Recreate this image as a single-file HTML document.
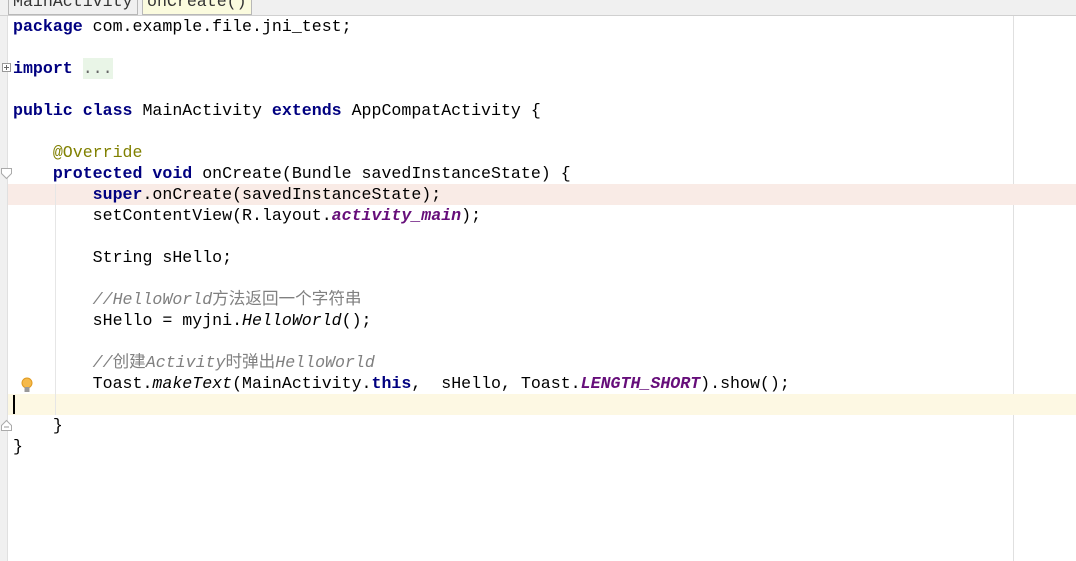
<!DOCTYPE html>
<html><head><meta charset="utf-8"><style>
body{margin:0;width:1076px;height:561px;overflow:hidden;background:#fff;position:relative;font-family:"Liberation Mono","Noto Sans CJK SC",monospace;}
.tabbar{position:absolute;left:0;top:0;width:1076px;height:15px;background:#f0f0f0;border-bottom:1px solid #d0d0d0;}
.tab{position:absolute;top:-6px;height:20px;border:1px solid #b8b8b8;border-top:none;font-size:16.6px;line-height:15px;padding:0 4px;color:#333;}
.gutter{position:absolute;left:0;top:16px;width:7px;height:545px;background:#f0f0f0;border-right:1px solid #e0e0e0;}
.margin{position:absolute;left:1013px;top:16px;width:1px;height:545px;background:#e0e0e0;}
.guide{position:absolute;width:1px;background:#e6e6e6;}
.row{position:absolute;left:8px;width:1068px;height:21px;}
.ln{position:absolute;left:13px;height:21px;line-height:21px;font-size:16.6px;white-space:pre;color:#000;}
.k{color:#000080;font-weight:bold;}
.a{color:#808000;}
.c{color:#808080;font-style:italic;}
.cj{color:#808080;font-style:normal;}
.f{color:#660e7a;font-weight:bold;font-style:italic;}
.i{font-style:italic;}
</style></head><body>
<div class="tabbar">
<div class="tab" style="left:8px;background:#f0f0f0;">MainActivity</div>
<div class="tab" style="left:142px;background:#fbfbde;">onCreate()</div>
</div>
<div class="gutter"></div>
<div class="margin"></div>
<div class="row" style="top:184px;background:#f9ebe6;"></div>
<div class="row" style="top:394px;background:#fdf8e3;"></div>
<div class="guide" style="left:55px;top:184px;height:231px;"></div>
<div style="position:absolute;left:83px;top:58px;width:30px;height:21px;background:#e9f5e7;"></div>
<div style="position:absolute;left:13px;top:395px;width:2px;height:19px;background:#000;"></div>
<svg style="position:absolute;left:2px;top:63px" width="10" height="10"><rect x="0.5" y="0.5" width="8" height="8" fill="#fff" stroke="#999"/><path d="M2 4.5h5M4.5 2v5" stroke="#666"/></svg>
<svg style="position:absolute;left:1px;top:168px" width="12" height="12"><path d="M0.5 0.5h10v5l-5 5l-5-5z" fill="#fff" stroke="#aaa"/></svg>
<svg style="position:absolute;left:1px;top:419px" width="12" height="12"><path d="M0.5 11.5h10v-5l-5-5l-5 5z" fill="#fff" stroke="#aaa"/><path d="M3 8h5" stroke="#999"/></svg>
<svg style="position:absolute;left:20px;top:377px" width="14" height="17"><circle cx="7" cy="6" r="5" fill="#f5b94a" stroke="#e09a20"/><rect x="4.5" y="10" width="5" height="5" fill="#999"/></svg>
<div class="ln" style="top:16px"><span class="k">package</span> com.example.file.jni_test;</div>
<div class="ln" style="top:58px"><span class="k">import</span> <span style="color:#666">...</span></div>
<div class="ln" style="top:100px"><span class="k">public class</span> MainActivity <span class="k">extends</span> AppCompatActivity {</div>
<div class="ln" style="top:142px">    <span class="a">@Override</span></div>
<div class="ln" style="top:163px">    <span class="k">protected void</span> onCreate(Bundle savedInstanceState) {</div>
<div class="ln" style="top:184px">        <span class="k">super</span>.onCreate(savedInstanceState);</div>
<div class="ln" style="top:205px">        setContentView(R.layout.<span class="f">activity_main</span>);</div>
<div class="ln" style="top:247px">        String sHello;</div>
<div class="ln" style="top:289px">        <span class="c">//HelloWorld<span class="cj">方法返回一个字符串</span></span></div>
<div class="ln" style="top:310px">        sHello = myjni.<span class="i">HelloWorld</span>();</div>
<div class="ln" style="top:352px">        <span class="c">//<span class="cj">创建</span>Activity<span class="cj">时弹出</span>HelloWorld</span></div>
<div class="ln" style="top:373px">        Toast.<span class="i">makeText</span>(MainActivity.<span class="k">this</span>,  sHello, Toast.<span class="f">LENGTH_SHORT</span>).show();</div>
<div class="ln" style="top:415px">    }</div>
<div class="ln" style="top:436px">}</div>
</body></html>
